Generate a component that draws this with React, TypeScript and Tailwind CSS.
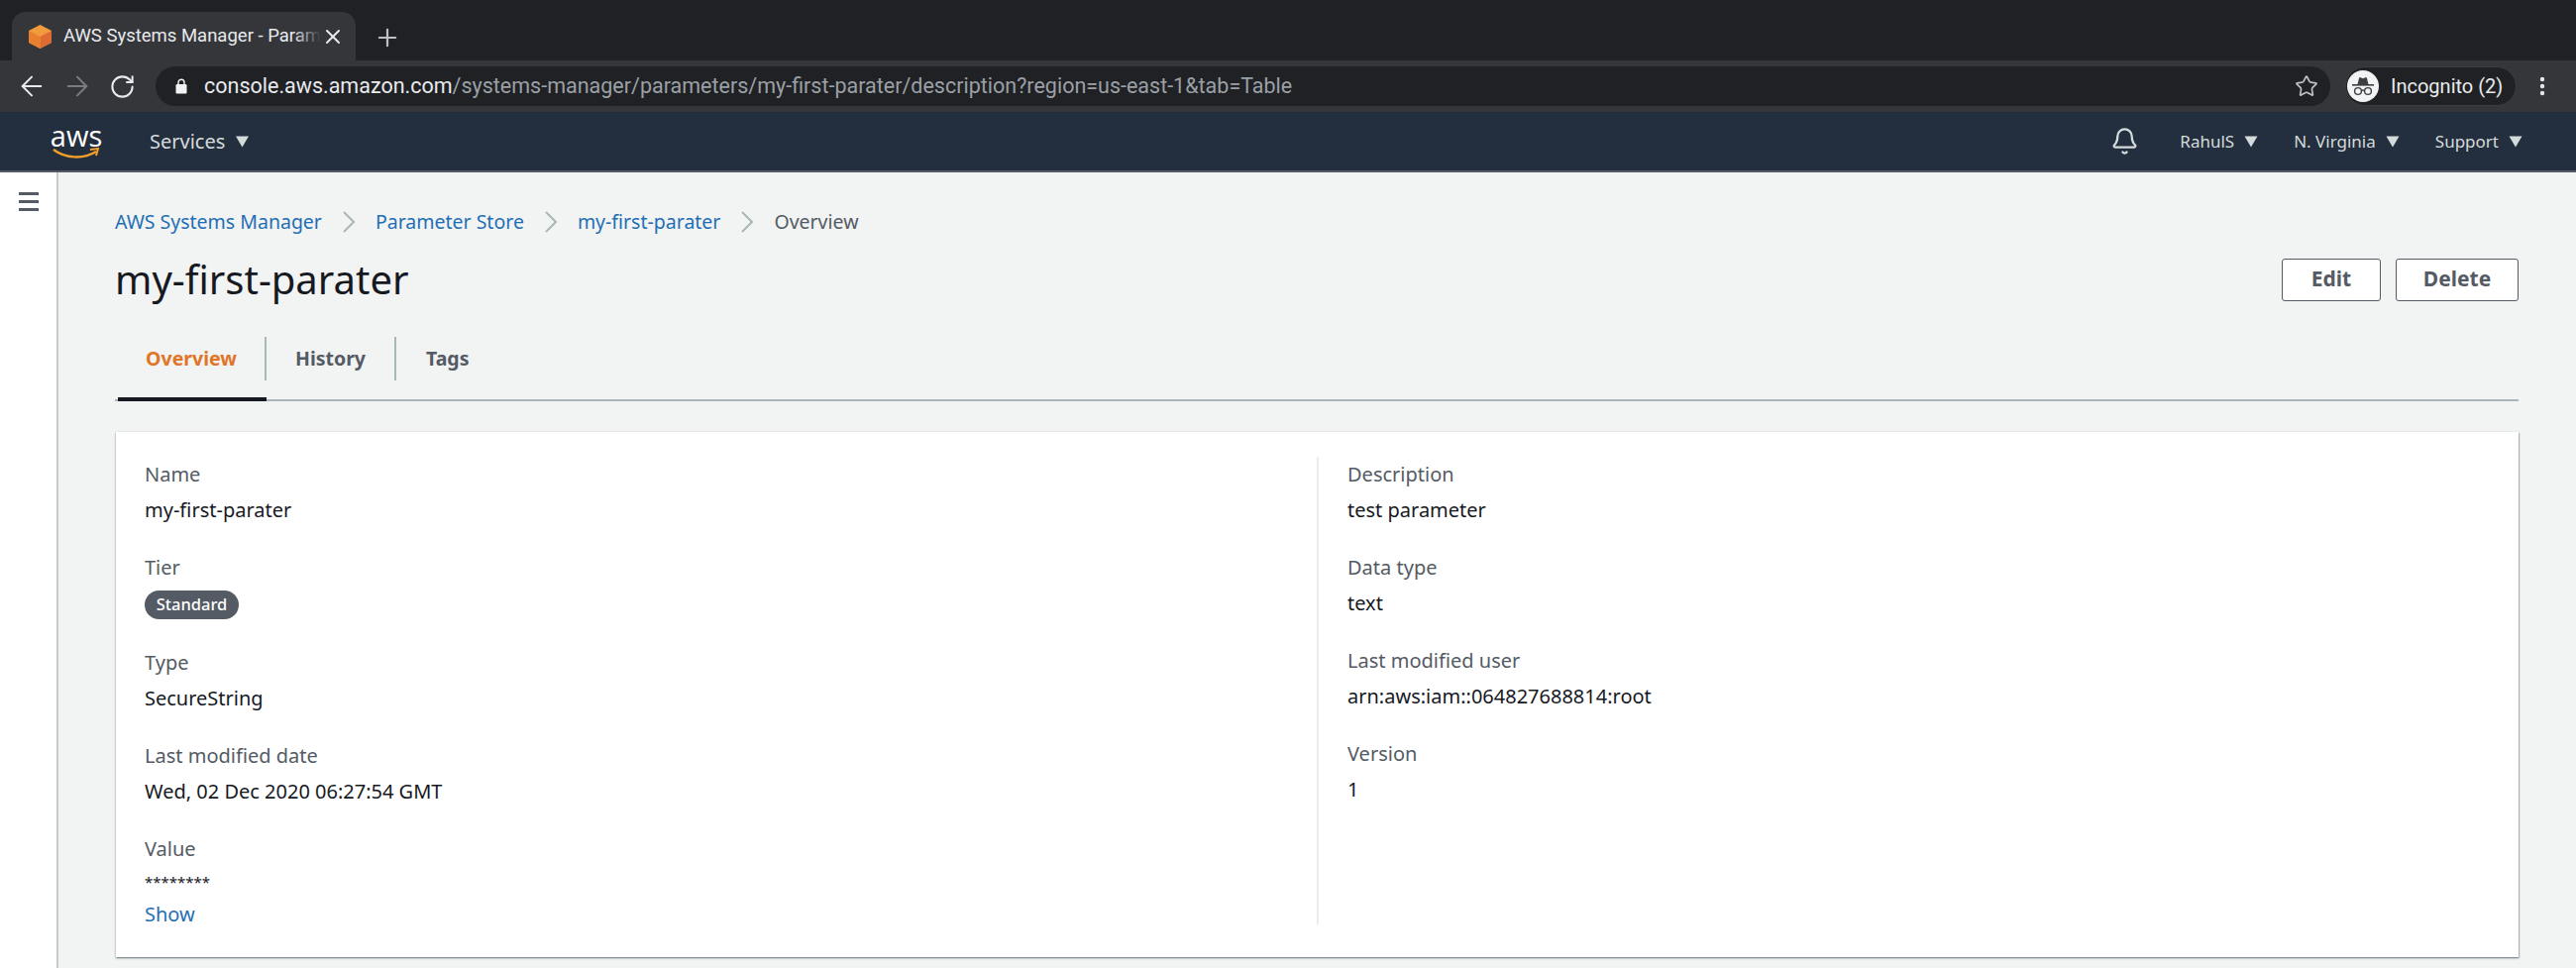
import { Plus, X, ArrowLeft, ArrowRight, RotateCw, Star, Bell, EllipsisVertical } from "lucide-react";

const Caret = ({ className = "" }: { className?: string }) => (
  <svg viewBox="0 0 14 12" className={`w-[14px] h-[12px] ${className}`}>
    <path d="M0.5 0.5h13L7 11.5z" fill="#d5dbdb" />
  </svg>
);

const Cube = () => (
  <svg viewBox="0 0 23 24" className="w-[23px] h-[24px] shrink-0">
    <path d="M11.5 0L23 6v12l-11.5 6L0 18V6z" fill="#f19a3e" />
    <path d="M11.5 12L23 6v12l-11.5 6z" fill="#dd6b33" />
    <path d="M11.5 12L0 6v12l11.5 6z" fill="#e8802f" />
  </svg>
);

const LockIcon = () => (
  <svg viewBox="0 0 12 16" className="w-3 h-4 shrink-0">
    <path d="M3 6.5V4.2a3 3 0 0 1 6 0v2.3" fill="none" stroke="#f1f3f4" strokeWidth="1.4" />
    <rect x="0.5" y="6" width="11" height="9.5" rx="1.2" fill="#f1f3f4" />
  </svg>
);

const IncognitoIcon = () => (
  <div className="w-8 h-8 rounded-full bg-[#f1f3f4] flex items-center justify-center shrink-0">
    <svg viewBox="0 0 32 32" className="w-8 h-8">
      <path d="M10.5 14l1.6-6.2c.2-.7.8-.9 1.4-.6l2.5 1 2.5-1c.6-.3 1.2-.1 1.4.6l1.6 6.2z" fill="#3c4043" />
      <rect x="5" y="14" width="22" height="1.6" fill="#3c4043" />
      <circle cx="11" cy="21" r="3.4" fill="none" stroke="#3c4043" strokeWidth="1.4" />
      <circle cx="21" cy="21" r="3.4" fill="none" stroke="#3c4043" strokeWidth="1.4" />
      <path d="M14.4 20.4c1-.6 2.2-.6 3.2 0" fill="none" stroke="#3c4043" strokeWidth="1.4" />
    </svg>
  </div>
);

const Crumb = ({ children }: { children: string }) => (
  <a className="text-[#1f6fb5]">{children}</a>
);

const Chevron = () => (
  <svg viewBox="0 0 14 22" className="w-[14px] h-[22px] mx-[20px]">
    <path d="M2 1l10 10L2 21" fill="none" stroke="#aab7b8" strokeWidth="2" />
  </svg>
);

const Field = ({ label, children }: { label: string; children: React.ReactNode }) => (
  <div>
    <div className="h-9 leading-9 text-[#545b64]">{label}</div>
    {children}
  </div>
);

const Value = ({ children }: { children: string }) => (
  <div className="h-9 leading-9 text-[#16191f]">{children}</div>
);

const HeaderMenu = ({ label }: { label: string }) => (
  <div className="flex items-center gap-[10px]">
    <span>{label}</span>
    <Caret />
  </div>
);

export default function App() {
  return (
    <div className="w-[2600px] h-[977px] overflow-hidden flex flex-col bg-[#f2f3f3] font-['Noto_Sans',sans-serif]">
      {/* Browser tab strip */}
      <div className="h-[61px] bg-[#202124] flex items-end pl-3 shrink-0 font-['Roboto',sans-serif]">
        <div className="w-[347px] h-[49px] bg-[#35363a] rounded-t-[14px] flex items-center pl-[17px] pr-[12px]">
          <Cube />
          <div className="relative ml-3 whitespace-nowrap text-[18.5px] text-[#e8eaed]">
            AWS Systems Manager - Param
            <div className="absolute inset-y-0 right-0 w-7 bg-gradient-to-r from-transparent to-[#35363a]" />
          </div>
          <X className="ml-auto w-6 h-6 shrink-0 text-[#e8eaed]" strokeWidth={2} />
        </div>
        <Plus className="ml-[18px] mb-[9px] w-7 h-7 text-[#bdc1c6]" strokeWidth={1.9} />
      </div>

      {/* Browser toolbar */}
      <div className="h-[52px] bg-[#35363a] flex items-center pl-[16px] pr-[18px] shrink-0 font-['Roboto',sans-serif]">
        <ArrowLeft className="w-8 h-8 text-[#e8eaed]" strokeWidth={1.5} />
        <ArrowRight className="ml-[14px] w-8 h-8 text-[#7a7c80]" strokeWidth={1.5} />
        <RotateCw className="ml-[16px] w-[27px] h-[27px] text-[#e8eaed]" strokeWidth={1.8} />
        <div className="ml-[20px] w-[2195px] h-10 rounded-full bg-[#202124] flex items-center pl-5 pr-[12px]">
          <LockIcon />
          <div className="ml-[17px] text-[21.5px] whitespace-nowrap text-[#9aa0a6]">
            <span className="text-[#e8eaed]">console.aws.amazon.com</span>
            /systems-manager/parameters/my-first-parater/description?region=us-east-1&amp;tab=Table
          </div>
          <Star className="ml-auto w-6 h-6 text-[#bdc1c6]" strokeWidth={1.7} />
        </div>
        <div className="ml-[15px] w-[173px] h-10 rounded-full bg-[#202124] border border-[#3c3d40] flex items-center pl-[1px]">
          <IncognitoIcon />
          <span className="ml-[12px] text-[20px] text-[#e8eaed] whitespace-nowrap">Incognito (2)</span>
        </div>
        <EllipsisVertical className="ml-[14px] w-6 h-6 text-[#e8eaed]" strokeWidth={2.4} />
      </div>

      {/* AWS console nav */}
      <div className="h-[61px] bg-[#232f3e] border-b-2 border-[#545b64] flex items-center pl-[53px] pr-[54px] shrink-0 text-[#d5dbdb]">
        <div className="w-[48px] flex flex-col items-center">
          <span className="text-[29px] leading-[24px] text-white font-['Open_Sans',sans-serif]">aws</span>
          <svg viewBox="0 0 48 12" className="w-[48px] h-[12px]">
            <path d="M1 2c12 9 30 10 43 2" fill="none" stroke="#f49f27" strokeWidth="2.4" />
            <path d="M38 2l8-1-2 7" fill="none" stroke="#f49f27" strokeWidth="2" />
          </svg>
        </div>
        <div className="ml-[50px] flex items-center gap-[10px] text-[20px]">
          <span>Services</span>
          <Caret className="w-[15px]" />
        </div>
        <Bell className="ml-auto w-[29px] h-[29px]" strokeWidth={1.9} />
        <div className="ml-[41px] flex items-center gap-[36px] text-[17px]">
          <HeaderMenu label="RahulS" />
          <HeaderMenu label="N. Virginia" />
          <HeaderMenu label="Support" />
        </div>
      </div>

      <div className="flex-1 flex min-h-0">
        {/* Collapsed side nav */}
        <div className="w-[59px] bg-white border-r-2 border-[#c4cbcc] shrink-0 pt-[20px] pl-[19px]">
          <div className="w-[20px] flex flex-col gap-[5px]">
            <div className="h-[3px] bg-[#545b64]" />
            <div className="h-[3px] bg-[#545b64]" />
            <div className="h-[3px] bg-[#545b64]" />
          </div>
        </div>

        <div className="flex-1 pl-[57px] pr-[58px]">
          <div className="pt-[35px] flex items-center h-[65px] text-[19.5px] whitespace-nowrap">
            <Crumb>AWS Systems Manager</Crumb>
            <Chevron />
            <Crumb>Parameter Store</Crumb>
            <Chevron />
            <Crumb>my-first-parater</Crumb>
            <Chevron />
            <span className="text-[#545b64]">Overview</span>
          </div>

          <div className="mt-[21px] flex items-center justify-between h-[44px]">
            <h1 className="text-[40px] leading-[44px] text-[#16191f]">my-first-parater</h1>
            <div className="flex gap-[15px] text-[21px] font-bold text-[#545b64]">
              <button className="w-[100px] h-[43px] bg-white border-[1.5px] border-[#545b64] rounded-[3px]">Edit</button>
              <button className="w-[124px] h-[43px] bg-white border-[1.5px] border-[#545b64] rounded-[3px]">Delete</button>
            </div>
          </div>

          {/* Tabs */}
          <div className="mt-[36px] h-[65px] border-b-2 border-[#aab7b8] flex pl-[3px] items-start text-[19.5px] font-bold text-[#545b64]">
            <div className="h-[65px] w-[150px] border-b-[4px] border-[#16191f] flex items-start">
              <div className="w-full h-[44px] border-r-2 border-[#aab7b8] flex items-center justify-center text-[#e07528]">Overview</div>
            </div>
            <div className="w-[131px] h-[44px] border-r-2 border-[#aab7b8] flex items-center justify-center">History</div>
            <div className="h-[44px] pl-[30px] flex items-center">Tags</div>
          </div>

          {/* Details card */}
          <div className="mt-[31px] ml-[1px] h-[530px] bg-white shadow-[0_1px_2px_rgba(0,28,36,0.5),1px_1px_1px_rgba(0,28,36,0.15)] grid grid-cols-[1212px_1fr] pt-[25px] text-[20px]">
            <div className="pl-[29px] flex flex-col gap-[22px]">
              <Field label="Name"><Value>my-first-parater</Value></Field>
              <Field label="Tier">
                <div className="h-[38px] flex items-center">
                  <span className="h-[29px] w-[95px] rounded-full bg-[#545b64] text-white text-[16.5px] font-medium flex items-center justify-center">Standard</span>
                </div>
              </Field>
              <Field label="Type"><Value>SecureString</Value></Field>
              <Field label="Last modified date"><Value>Wed, 02 Dec 2020 06:27:54 GMT</Value></Field>
              <Field label="Value">
                <div className="h-[30px] leading-[30px] text-[15px] text-[#16191f]">********</div>
                <a className="block h-9 leading-9 text-[#1f6fb5]">Show</a>
              </Field>
            </div>
            <div className="h-[472px] border-l-2 border-[#eaeded] pl-[29px] flex flex-col gap-[22px]">
              <Field label="Description"><Value>test parameter</Value></Field>
              <Field label="Data type"><Value>text</Value></Field>
              <Field label="Last modified user"><Value>arn:aws:iam::064827688814:root</Value></Field>
              <Field label="Version"><Value>1</Value></Field>
            </div>
          </div>
        </div>
      </div>
    </div>
  );
}
